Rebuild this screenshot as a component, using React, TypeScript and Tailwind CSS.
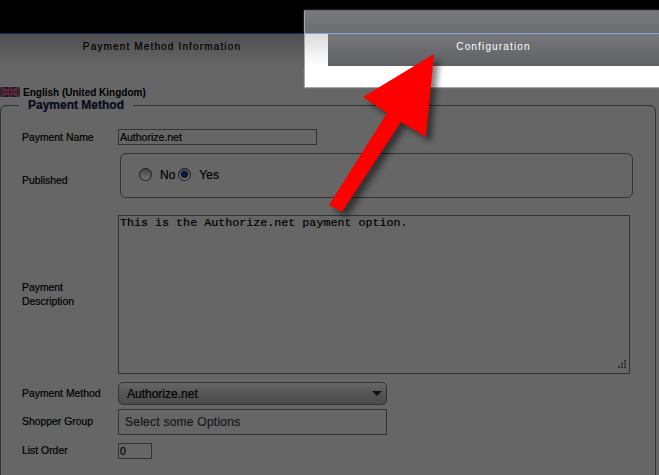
const sans = { fontFamily: '"Liberation Sans", Arial, sans-serif' };

function Flag() {
  return (
    <svg width="20" height="10" viewBox="0 0 20 10" className="block">
      <rect width="20" height="10" fill="#15172c" />
      <path d="M0 0L20 10M20 0L0 10" stroke="#4e4a50" strokeWidth="2.2" />
      <path d="M0 0L20 10M20 0L0 10" stroke="#5a1222" strokeWidth="1" />
      <path d="M10 0V10M0 5H20" stroke="#4e4a50" strokeWidth="3.2" />
      <path d="M10 0V10M0 5H20" stroke="#5a1222" strokeWidth="2" />
    </svg>
  );
}

function Arrow() {
  const pts = "434,54 363,97 387,113 329,205 342,212 401,122 426,137";
  return (
    <svg width="659" height="475" viewBox="0 0 659 475" className="absolute left-0 top-0 z-30 pointer-events-none">
      <defs>
        <filter id="arrow-blur" x="-20%" y="-20%" width="140%" height="140%">
          <feGaussianBlur stdDeviation="3" />
        </filter>
      </defs>
      <polygon points={pts} fill="#000" opacity="0.5" transform="translate(5 5)" filter="url(#arrow-blur)" />
      <polygon points={pts} fill="#ff0000" />
    </svg>
  );
}

function Radio({ checked }: { checked?: boolean }) {
  return (
    <span className="inline-flex h-[13px] w-[13px] items-center justify-center rounded-full border border-[#1c1c1c] bg-gradient-to-b from-[#444444] to-[#777777]">
      {checked && <span className="h-[7px] w-[7px] rounded-full border border-black bg-[#0a1a50]" />}
    </span>
  );
}

export default function App() {
  return (
    <div className="relative h-[475px] w-[659px] overflow-hidden bg-[#666666] text-black" style={sans}>
      <div className="h-[33px] bg-black" />

      {/* highlighted region behind the Configuration tab */}
      <div className="absolute left-[304px] top-[10px] z-0 flex h-[78px] w-[355px] flex-col border border-[#a6a6a6] border-t-[#6a6a6a] border-r-0 shadow-[0_0_2px_rgba(140,140,140,0.6)]">
        <div className="h-[22px] bg-gradient-to-b from-[#77787c] to-[#6c6d71]" />
        <div className="h-px bg-[#8aa8dc]" />
        <div className="flex-1 bg-gradient-to-b from-[#dcdcdc] from-0% to-white to-60%" />
      </div>

      <div className="relative z-10 grid h-[33px] grid-cols-[304px_24px_331px] text-[10px] tracking-[1.15px]">
        <div className="flex items-center justify-center border-t border-[#1c2a55] bg-gradient-to-b from-[#4f4f4f] to-[#666666] pb-[8px] pl-[20px] [-webkit-text-stroke:0.2px_#000]">
          Payment Method Information
        </div>
        <div />
        <div className="mt-px flex items-center justify-center bg-gradient-to-b from-[#77787c] to-[#5f6064] pb-[8px] text-white">
          Configuration
        </div>
      </div>

      <div className="mt-[20px] flex h-[12px] items-center gap-[3px] text-[10px] font-bold">
        <Flag />
        <span>English (United Kingdom)</span>
      </div>

      <fieldset className="mr-[3px] h-[400px] rounded-[6px] border border-[#333333] pl-[21px] [-webkit-text-stroke:0.2px_#000]">
        <legend className="ml-[-3px] px-[9px] text-[12px] font-bold leading-[14px] text-[#080b24]">Payment Method</legend>

        <div className="mt-[17px] flex h-[16px] items-center text-[10.4px]">
          <label className="w-[96px] pt-[2px]">Payment Name</label>
          <div className="h-[16px] w-[199px] border border-[#333333] pl-[1px] text-[10.5px] leading-[14px]">Authorize.net</div>
        </div>

        <div className="mt-[8px] flex h-[45px] items-center text-[10.4px]">
          <label className="w-[98px] pt-[11px]">Published</label>
          <div className="flex h-[45px] w-[513px] items-center rounded-[6px] border border-[#333333] pb-[2px] pl-[18px] text-[12px]">
            <Radio />
            <span className="ml-[8px] mr-[3px]">No</span>
            <Radio checked />
            <span className="ml-[8px]">Yes</span>
          </div>
        </div>

        <div className="mt-[17px] flex h-[159px] items-end text-[10.4px] leading-[14px]">
          <label className="w-[96px] pb-[65px]">
            Payment
            <br />
            Description
          </label>
          <div className="relative h-[159px] w-[512px] border border-[#333333] pl-[1px] pt-[1px] text-[11.7px] leading-[13px]" style={{ fontFamily: '"Liberation Mono", "Courier New", monospace' }}>
            This is the Authorize.net payment option.
            <svg width="12" height="12" viewBox="0 0 12 12" className="absolute bottom-[2px] right-[2px]">
              <path d="M9 1h2v2H9zM6 4h2v2H6zM9 4h2v2H9zM3 7h2v2H3zM6 7h2v2H6zM9 7h2v2H9z" fill="#333" />
            </svg>
          </div>
        </div>

        <div className="mt-[8px] flex h-[23px] items-center text-[10.4px]">
          <label className="w-[96px] pt-[1px]">Payment Method</label>
          <div className="flex h-[23px] w-[269px] items-center justify-between rounded-[5px] border border-[#333333] bg-gradient-to-b from-[#666666] via-[#555555] to-[#4c4c4c] pl-[8px] pr-[3px] text-[12px]">
            <span>Authorize.net</span>
            <svg width="10" height="5" viewBox="0 0 10 5" className="mr-[1px]">
              <path d="M0 0H10L5 5Z" fill="#111" />
            </svg>
          </div>
        </div>

        <div className="mt-[4px] flex h-[26px] items-center text-[10.4px]">
          <label className="w-[96px]">Shopper Group</label>
          <div className="flex h-[26px] w-[269px] items-center border border-[#333333] pl-[6px] text-[12px] tracking-[0.25px] text-[#222222]">Select some Options</div>
        </div>

        <div className="mt-[8px] flex h-[16px] items-center text-[10.4px]">
          <label className="w-[96px]">List Order</label>
          <div className="h-[16px] w-[34px] border border-[#333333] pl-[1px] text-[10.5px] leading-[14px]">0</div>
        </div>
      </fieldset>

      <Arrow />
    </div>
  );
}
